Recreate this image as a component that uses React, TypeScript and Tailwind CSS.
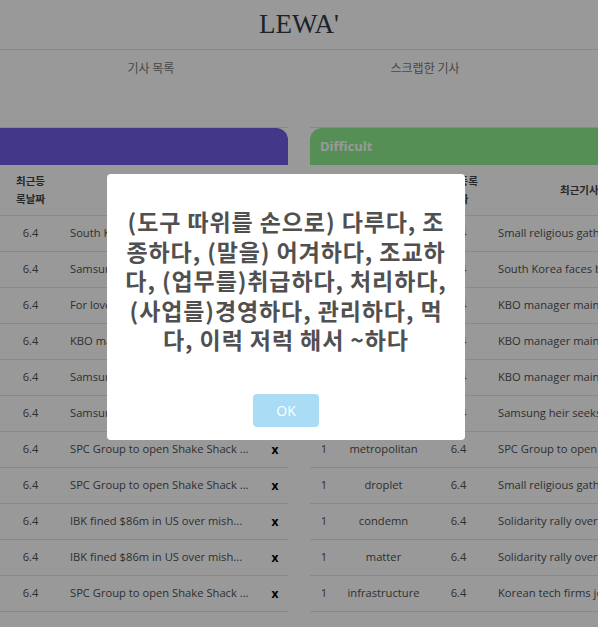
import React from "react";

type Row = { count: string; word: string; date: string; title: string };

const leftRows: Row[] = [
  { count: "2", word: "scale", date: "6.4", title: "South Korea faces biggest deba..." },
  { count: "2", word: "demand", date: "6.4", title: "Samsung heir seeks review of p..." },
  { count: "2", word: "vaccine", date: "6.4", title: "For love of the game: Korean f..." },
  { count: "2", word: "resume", date: "6.4", title: "KBO manager maintains faith in..." },
  { count: "2", word: "tension", date: "6.4", title: "Samsung heir seeks review of p..." },
  { count: "2", word: "witness", date: "6.4", title: "Samsung heir seeks review of p..." },
  { count: "1", word: "expand", date: "6.4", title: "SPC Group to open Shake Shack ..." },
  { count: "1", word: "outlet", date: "6.4", title: "SPC Group to open Shake Shack ..." },
  { count: "1", word: "penalty", date: "6.4", title: "IBK fined $86m in US over mish..." },
  { count: "1", word: "violate", date: "6.4", title: "IBK fined $86m in US over mish..." },
  { count: "1", word: "franchise", date: "6.4", title: "SPC Group to open Shake Shack ..." },
];

const rightRows: Row[] = [
  { count: "1", word: "handle", date: "6.4", title: "Small religious gatherings lin..." },
  { count: "1", word: "contain", date: "6.4", title: "South Korea faces biggest deba..." },
  { count: "1", word: "maintain", date: "6.4", title: "KBO manager maintains faith in..." },
  { count: "1", word: "faith", date: "6.4", title: "KBO manager maintains faith in..." },
  { count: "1", word: "slump", date: "6.4", title: "KBO manager maintains faith in..." },
  { count: "1", word: "review", date: "6.4", title: "Samsung heir seeks review of p..." },
  { count: "1", word: "metropolitan", date: "6.4", title: "SPC Group to open Shake Shack ..." },
  { count: "1", word: "droplet", date: "6.4", title: "Small religious gatherings lin..." },
  { count: "1", word: "condemn", date: "6.4", title: "Solidarity rally over George F..." },
  { count: "1", word: "matter", date: "6.4", title: "Solidarity rally over George F..." },
  { count: "1", word: "infrastructure", date: "6.4", title: "Korean tech firms join hands t..." },
];

function Card({
  title,
  headerClass,
  rows,
  dateHeader,
  className,
}: {
  title: string;
  headerClass: string;
  rows: Row[];
  dateHeader: React.ReactNode;
  className: string;
}) {
  return (
    <div className={"shrink-0 w-[406px] border-t border-[#e5e5e5] " + className}>
      <div className={"h-[37px] flex items-center px-[10px] text-[13px] font-bold text-white " + headerClass}>
        {title}
      </div>
      <div className="flex h-[51px] border-b border-[#e5e5e5] text-[10.5px] font-bold leading-[18px] text-[#444] font-['Noto_Sans_CJK_KR',sans-serif]">
        <div className="w-[28px] flex items-center justify-center">횟수</div>
        <div className="w-[91px] flex items-center justify-center">단어</div>
        <div className="w-[59px] flex items-center justify-center text-center">{dateHeader}</div>
        <div className="w-[202px] flex items-center justify-center">최근기사제목</div>
        <div className="w-[26px]" />
      </div>
      {rows.map((r, i) => (
        <div key={i} className="flex h-[36px] border-b border-[#e5e5e5] text-[11.2px] text-[#505050] items-center whitespace-nowrap">
          <div className="w-[28px] text-center">{r.count}</div>
          <div className="w-[91px] text-center">{r.word}</div>
          <div className="w-[59px] text-center">{r.date}</div>
          <div className="w-[202px] pl-[10px] overflow-hidden">{r.title}</div>
          <div className="w-[26px] text-center text-[12px] font-bold text-black">x</div>
        </div>
      ))}
    </div>
  );
}

export default function App() {
  return (
    <div className="relative w-[598px] h-[627px] overflow-hidden bg-white font-['Open_Sans','Noto_Sans_CJK_KR',sans-serif]">
      <div className="h-[50px] border-b border-[#e5e5e5] flex items-center justify-center">
        <span className="font-['Liberation_Serif',serif] text-[27px] text-[#2f3b48]">LEWA'</span>
      </div>
      <div className="ml-[14px] w-[548px] h-[36px] flex items-center text-[12px] text-[#777] font-['Noto_Sans_CJK_KR',sans-serif]">
        <div className="flex-1 text-center">기사 목록</div>
        <div className="flex-1 text-center">스크랩한 기사</div>
      </div>
      <div className="mt-[41px] flex">
        <Card
          title="Normal"
          headerClass="bg-[#715de6] rounded-tr-[12px] rounded-tl-[12px]"
          rows={leftRows}
          dateHeader={
            <span>
              최근등
              <br />
              록날짜
            </span>
          }
          className="ml-[-118px]"
        />
        <Card
          title="Difficult"
          headerClass="bg-[#90ee90] rounded-tl-[12px] rounded-tr-[12px]"
          rows={rightRows}
          dateHeader={
            <span>
              최근등록
              <br />
              날짜
            </span>
          }
          className="ml-[22px]"
        />
      </div>

      <div className="absolute inset-0 bg-black/40">
        <div className="absolute left-[107px] top-[174px] w-[358px] h-[266px] bg-white rounded-[4px] flex flex-col items-center pt-[33px]">
          <div className="text-[23px] leading-[29.5px] tracking-[0.9px] font-bold text-[#505050] text-center font-['Noto_Sans_CJK_KR',sans-serif]">
            <div className="whitespace-nowrap">(도구 따위를 손으로) 다루다, 조</div>
            <div className="whitespace-nowrap">종하다, (말을) 어겨하다, 조교하</div>
            <div className="whitespace-nowrap">다, (업무를)취급하다, 처리하다,</div>
            <div className="whitespace-nowrap">(사업를)경영하다, 관리하다, 먹</div>
            <div className="whitespace-nowrap">다, 이럭 저럭 해서 ~하다</div>
          </div>
          <button className="mt-[39.5px] w-[66px] h-[33px] rounded-[4px] bg-[#aadcf5] text-white text-[14px] font-['Open_Sans',sans-serif]">
            OK
          </button>
        </div>
      </div>
    </div>
  );
}
